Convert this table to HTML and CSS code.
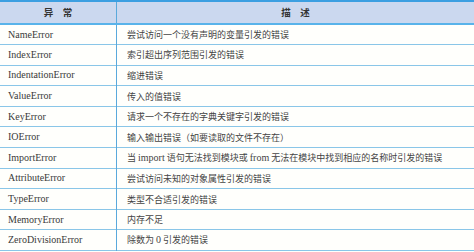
FILE: index.html
```html
<!DOCTYPE html>
<html lang="zh-CN">
<head>
<meta charset="utf-8">
<title>Python 异常</title>
<link rel="stylesheet" href="styles.css">
</head>
<body>
<table class="errors">
  <thead>
    <tr><th class="col-name">异&emsp;常</th><th class="col-desc">描&emsp;述</th></tr>
  </thead>
  <tbody>
    <tr><td class="name">NameError</td><td class="desc">尝试访问一个没有声明的变量引发的错误</td></tr>
    <tr><td class="name">IndexError</td><td class="desc">索引超出序列范围引发的错误</td></tr>
    <tr><td class="name">IndentationError</td><td class="desc">缩进错误</td></tr>
    <tr><td class="name">ValueError</td><td class="desc">传入的值错误</td></tr>
    <tr><td class="name">KeyError</td><td class="desc">请求一个不存在的字典关键字引发的错误</td></tr>
    <tr><td class="name">IOError</td><td class="desc">输入输出错误（如要读取的文件不存在）</td></tr>
    <tr><td class="name">ImportError</td><td class="desc">当 <span class="en">import</span> 语句无法找到模块或 <span class="en">from</span> 无法在模块中找到相应的名称时引发的错误</td></tr>
    <tr><td class="name">AttributeError</td><td class="desc">尝试访问未知的对象属性引发的错误</td></tr>
    <tr><td class="name">TypeError</td><td class="desc">类型不合适引发的错误</td></tr>
    <tr><td class="name">MemoryError</td><td class="desc">内存不足</td></tr>
    <tr><td class="name">ZeroDivisionError</td><td class="desc">除数为 <span class="en">0</span> 引发的错误</td></tr>
  </tbody>
</table>
</body>
</html>
```
FILE: styles.css
```css
html, body {
  margin: 0;
  padding: 0;
  background: #fffffc;
}
.errors {
  width: 474px;
  border-collapse: collapse;
  table-layout: fixed;
  font-family: "Liberation Serif", "Noto Sans CJK SC", serif;
  color: #3a3a3a;
}
.errors thead tr {
  height: 23px;
  background: #cbd8ef;
  border-top: 2px solid #3c9fe1;
  border-bottom: 2px solid #59b3ea;
}
.errors th {
  font-family: "Noto Sans CJK SC", sans-serif;
  font-size: 9.5px;
  font-weight: bold;
  color: #333;
  padding: 0;
  text-align: center;
  line-height: 1;
}
.col-name { width: 116px; }
.errors th.col-name { border-right: 1px solid #5aa9dc; }
.errors tbody tr {
  height: 20.6px;
  border-bottom: 1px solid #8ac6e8;
}
.errors td {
  padding: 0 0 0 8px;
  vertical-align: middle;
  line-height: 1;
  white-space: nowrap;
}
.errors td.name {
  font-size: 10px;
  border-right: 1px solid #5aa9dc;
}
.errors td.desc {
  font-family: "Noto Sans CJK SC", sans-serif;
  font-size: 9px;
  color: #444;
  padding-left: 10px;
}
.en {
  font-family: "Liberation Serif", serif;
  font-size: 10px;
}
```
